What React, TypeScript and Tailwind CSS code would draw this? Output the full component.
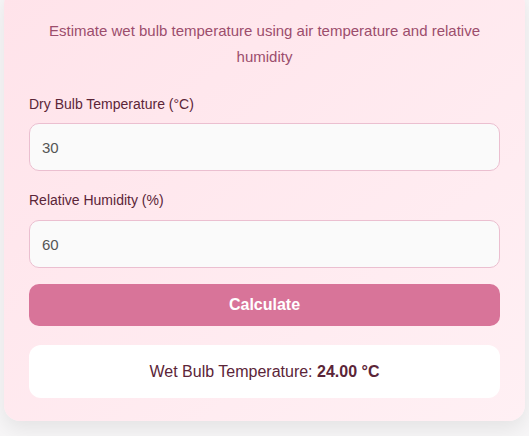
import React, { useState } from "react";

export default function App() {
  const [dry, setDry] = useState("30");
  const [rh, setRh] = useState("60");
  const [result, setResult] = useState<string>("24.00");

  const calculate = () => {
    const t = parseFloat(dry);
    const h = parseFloat(rh);
    if (isNaN(t) || isNaN(h)) return;
    // simple approximation
    const tw = t - (100 - h) / 5 * 0.6;
    setResult(tw.toFixed(2));
  };

  return (
    <div
      className="min-h-[436px] w-[529px] overflow-hidden bg-[#f7f6f7] px-1"
      style={{ fontFamily: '"Liberation Sans", Arial, sans-serif' }}
    >
      <div className="-mt-3 rounded-2xl bg-gradient-to-br from-[#ffe3ea] to-[#fff0f4] px-[25px] pt-[30px] pb-[23px] shadow-[0_8px_20px_rgba(0,0,0,0.08)]">
        <p className="mb-6 text-center text-[15px] leading-[26px] text-[#9c4d6c]">
          Estimate wet bulb temperature using air temperature and relative
          humidity
        </p>

        <label className="mb-[9px] block text-[14px] leading-5 text-[#5b2538]">
          Dry Bulb Temperature (°C)
        </label>
        <input
          value={dry}
          onChange={(e) => setDry(e.target.value)}
          className="block h-12 w-full rounded-[10px] border border-[#ebbfd0] bg-[#fafafa] px-3 text-[15px] text-[#555] outline-none"
        />

        <label className="mt-[19px] mb-[10px] block text-[14px] leading-5 text-[#5b2538]">
          Relative Humidity (%)
        </label>
        <input
          value={rh}
          onChange={(e) => setRh(e.target.value)}
          className="block h-12 w-full rounded-[10px] border border-[#ebbfd0] bg-[#fafafa] px-3 text-[15px] text-[#555] outline-none"
        />

        <button
          onClick={calculate}
          className="mt-4 block h-[42px] w-full rounded-[10px] bg-[#d87499] text-[16px] font-bold text-white"
        >
          Calculate
        </button>

        <div className="mt-[19px] flex h-[53px] items-center justify-center rounded-xl bg-white text-[16px] text-[#5b2538]">
          <span>
            Wet Bulb Temperature: <b className="font-bold">{result} °C</b>
          </span>
        </div>
      </div>
    </div>
  );
}
